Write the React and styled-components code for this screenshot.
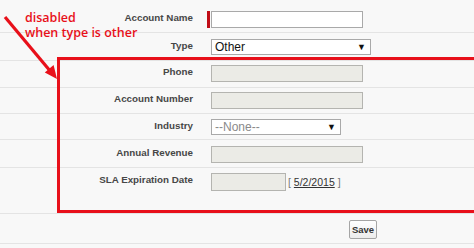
import styled, { createGlobalStyle } from "styled-components";

const GlobalStyle = createGlobalStyle`
    html, body {
        margin: 0;
        padding: 0;
        background: #f8f8f8;
        font-family: "Liberation Sans", Arial, sans-serif;
    }
`;

const rows = [
    { label: "Account Name", top: 11, height: 33, kind: "text", required: true },
    { label: "Type", top: 6, height: 28, kind: "select", value: "Other", width: 160 },
];

const grouped = [
    { label: "Phone", top: 4, height: 27, kind: "disabled" },
    { label: "Account Number", top: 4, height: 26, kind: "disabled" },
    { label: "Industry", top: 5, height: 26, kind: "select", value: "--None--", width: 130, muted: true },
    { label: "Annual Revenue", top: 6, height: 28, kind: "disabled" },
    { label: "SLA Expiration Date", top: 5, height: 46, kind: "date" },
];

function Field({ row }) {
    if (row.kind === "select") {
        return (
            <Select $width={row.width}>
                <SelectText $muted={row.muted}>{row.value}</SelectText>
                <Caret>▼</Caret>
            </Select>
        );
    }
    if (row.kind === "date") {
        return (
            <DateWrap>
                <Input $disabled $width={75} $h={18} />
                <DateLink>
                    [ <a>5/2/2015</a> ]
                </DateLink>
            </DateWrap>
        );
    }
    return <Input $disabled={row.kind === "disabled"} />;
}

function FormRow({ row }) {
    return (
        <Row $top={row.top} $height={row.height}>
            <Label>{row.label}</Label>
            <FieldCell>
                <Marker $on={row.required} />
                <Field row={row} />
            </FieldCell>
        </Row>
    );
}

export default function App() {
    return (
        <Page>
            <GlobalStyle />
            {rows.map((r) => (
                <FormRow key={r.label} row={r} />
            ))}
            <Group>
                {grouped.map((r) => (
                    <FormRow key={r.label} row={r} />
                ))}
            </Group>
            <ButtonRow>
                <SaveButton>Save</SaveButton>
            </ButtonRow>

            <Note>
                disabled
                <br />
                when type is other
            </Note>
            <Arrow width="70" height="90" viewBox="0 0 70 90">
                <line x1="5" y1="17" x2="51" y2="72" stroke="#e8101a" strokeWidth="3.2" />
                <polygon points="57,79 44.8,72.4 53.6,65" fill="#e8101a" />
            </Arrow>
        </Page>
    );
}

/* ================== STYLES ================== */

const Page = styled.div`
    position: relative;
    width: 474px;
    height: 248px;
    overflow: hidden;
    background: #f8f8f8;
`;

const Row = styled.div`
    box-sizing: border-box;
    display: grid;
    grid-template-columns: 193px 1fr;
    column-gap: 14px;
    align-items: start;
    height: ${({ $height }) => $height}px;
    padding-top: ${({ $top }) => $top}px;
    border-bottom: 1px solid #e4e4e4;
`;

const Label = styled.div`
    text-align: right;
    font-size: 9.8px;
    line-height: 14px;
    font-weight: 700;
    color: #474747;
    white-space: nowrap;
`;

const FieldCell = styled.div`
    display: flex;
    align-items: stretch;
`;

const Marker = styled.span`
    width: 3px;
    margin-right: 1px;
    background: ${({ $on }) => ($on ? "#c00d17" : "transparent")};
`;

const Input = styled.div`
    box-sizing: border-box;
    width: ${({ $width }) => $width || 152}px;
    height: ${({ $h }) => $h || 17}px;
    border: 1px solid ${({ $disabled }) => ($disabled ? "#b4b4b0" : "#a9a9a9")};
    background: ${({ $disabled }) => ($disabled ? "#ebebe6" : "#ffffff")};
`;

const Select = styled.div`
    box-sizing: border-box;
    width: ${({ $width }) => $width}px;
    height: 16px;
    display: flex;
    align-items: center;
    justify-content: space-between;
    padding: 0 4px 0 3px;
    border: 1px solid #a9a9a9;
    background: #fff;
`;

const SelectText = styled.span`
    font-size: 12px;
    color: ${({ $muted }) => ($muted ? "#8a8a8a" : "#111")};
`;

const Caret = styled.span`
    font-size: 9px;
    line-height: 9px;
    color: #111;
`;

const DateWrap = styled.div`
    display: flex;
    align-items: center;
    gap: 2px;
`;

const DateLink = styled.span`
    font-size: 10.5px;
    color: #777;

    a {
        color: #333;
        text-decoration: underline;
    }
`;

const Group = styled.div`
    position: relative;

    &::after {
        content: "";
        position: absolute;
        left: 57px;
        top: -4px;
        right: -20px;
        bottom: 1px;
        border: 3px solid #e8101a;
        pointer-events: none;
    }
`;

const ButtonRow = styled.div`
    box-sizing: border-box;
    height: 30px;
    display: flex;
    align-items: flex-start;
    padding: 6px 0 0 349px;
    border-bottom: 1px solid #e4e4e4;
`;

const SaveButton = styled.button`
    box-sizing: border-box;
    width: 28px;
    height: 19px;
    padding: 0;
    border: 1px solid #a5a5a5;
    border-radius: 2px;
    background: linear-gradient(#ffffff, #ececec);
    font-family: "Liberation Sans", Arial, sans-serif;
    font-size: 9.5px;
    font-weight: 700;
    color: #333;
`;

const Note = styled.div`
    position: absolute;
    left: 25px;
    top: 10px;
    font-family: "Open Sans", "Liberation Sans", sans-serif;
    font-weight: 600;
    font-size: 12.5px;
    line-height: 15px;
    color: #e8101a;
    white-space: nowrap;
`;

const Arrow = styled.svg`
    position: absolute;
    left: 0;
    top: 0;
`;
